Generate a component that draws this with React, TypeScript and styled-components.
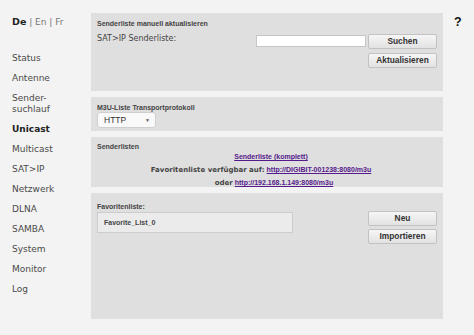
import React from 'react';
import styled, { createGlobalStyle } from 'styled-components';

const Global = createGlobalStyle`
  html, body { margin: 0; padding: 0; background: #f3f3f3; }
  body { width: 474px; height: 335px; overflow: hidden; }
`;

const Page = styled.div`
  display: flex;
  width: 474px;
  height: 335px;
`;

const Sidebar = styled.nav`
  width: 91px;
  flex: none;
  box-sizing: border-box;
  padding: 17px 0 0 12px;
  font-family: "DejaVu Sans", sans-serif;
  font-size: 9px;
  color: #4a4a4a;
`;

const LangRow = styled.div`
  line-height: 10px;
  color: #777;
`;

const Lang = styled.span<{ $active?: boolean }>`
  font-weight: ${p => (p.$active ? 700 : 400)};
  font-size: ${p => (p.$active ? '9.5px' : '9px')};
  color: ${p => (p.$active ? '#222' : '#777')};
`;

const Menu = styled.ul`
  list-style: none;
  margin: 21px 0 0;
  padding: 0;
`;

const MenuItem = styled.li<{ $active?: boolean }>`
  line-height: 11px;
  padding: 4.5px 0;
  font-weight: ${p => (p.$active ? 700 : 400)};
  color: ${p => (p.$active ? '#222' : '#4a4a4a')};
`;

const Main = styled.main`
  width: 352px;
  flex: none;
  padding-top: 13px;
  display: flex;
  flex-direction: column;
  gap: 6px;
`;

const Panel = styled.section<{ $h: number; $pt: number }>`
  box-sizing: border-box;
  height: ${p => p.$h}px;
  background: #e0dfdf;
  padding: ${p => p.$pt}px 6px 0 6px;
  font-family: "Liberation Sans", Arial, sans-serif;
  color: #444;
`;

const PanelTitle = styled.div`
  font-size: 7px;
  font-weight: 700;
  line-height: 8px;
  color: #444;
`;

const UpdateRow = styled.div`
  display: flex;
  justify-content: space-between;
  margin-top: 5px;
`;

const Label = styled.div`
  font-family: "DejaVu Sans", sans-serif;
  font-size: 8px;
  line-height: 10px;
  margin-top: 1px;
  color: #444;
`;

const Controls = styled.div`
  display: grid;
  grid-template-columns: 110px 69px;
  column-gap: 2px;
  row-gap: 4px;
  margin-top: 0.5px;
`;

const TextInput = styled.input`
  box-sizing: border-box;
  width: 110px;
  height: 12px;
  margin: 1.5px 0 0;
  padding: 0 3px;
  border: 1px solid #c6c6c6;
  background: #fff;
  outline: none;
`;

const Button = styled.button<{ $col?: number }>`
  box-sizing: border-box;
  width: 69px;
  height: 15px;
  padding: 0;
  grid-column: ${p => p.$col ?? 'auto'};
  border: 1px solid #c2c2c2;
  border-radius: 2px;
  background: linear-gradient(#f6f6f6, #e2e2e2);
  font-family: "Liberation Sans", Arial, sans-serif;
  font-size: 8.4px;
  font-weight: 700;
  color: #333;
  line-height: 13px;
`;

const Select = styled.div`
  box-sizing: border-box;
  width: 59px;
  height: 16px;
  display: flex;
  align-items: center;
  justify-content: space-between;
  padding: 0 5px 0 6px;
  border: 1px solid #cfcfcf;
  border-radius: 3px;
  background: #f9f9f9;
  font-size: 8.5px;
  color: #333;
`;

const Caret = styled.span`
  font-size: 5px;
  color: #555;
`;

const LinkBlock = styled.div`
  margin-top: -1px;
  text-align: center;
  font-weight: 700;
  color: #444;
`;

const Line = styled.div<{ $shift?: number }>`
  height: 13px;
  line-height: 13px;
  font-size: 7px;
  white-space: nowrap;
  transform: translateX(${p => p.$shift ?? 0}px);
`;

const Link = styled.a`
  color: #551a8b;
  text-decoration: underline;
`;

const Plain = styled.span`
  font-family: "DejaVu Sans", sans-serif;
`;

const FavRow = styled.div`
  display: flex;
  justify-content: space-between;
`;

const FavColumn = styled.div`
  display: flex;
  flex-direction: column;
`;

const FavBox = styled.div`
  box-sizing: border-box;
  width: 196px;
  height: 21px;
  margin-top: 1px;
  padding-left: 6px;
  border: 1px solid #cdcdcd;
  background: #ebebeb;
  font-size: 7px;
  font-weight: 700;
  line-height: 19px;
  color: #444;
`;

const ButtonStack = styled.div`
  display: flex;
  flex-direction: column;
  gap: 3px;
  margin-top: 8px;
`;

const Help = styled.div`
  padding: 15px 0 0 11px;
  font-family: "Liberation Sans", Arial, sans-serif;
  font-size: 12.5px;
  font-weight: 700;
  line-height: 14px;
  color: #111;
`;

const menu = [
  'Status',
  'Antenne',
  'Sender-\nsuchlauf',
  'Unicast',
  'Multicast',
  'SAT>IP',
  'Netzwerk',
  'DLNA',
  'SAMBA',
  'System',
  'Monitor',
  'Log',
];

export default function App() {
  return (
    <>
      <Global />
      <Page>
        <Sidebar>
          <LangRow>
            <Lang $active>De</Lang> | <Lang>En</Lang> | <Lang>Fr</Lang>
          </LangRow>
          <Menu>
            {menu.map(m => (
              <MenuItem key={m} $active={m === 'Unicast'}>
                {m.split('\n').map((part, i) => (
                  <div key={i}>{part}</div>
                ))}
              </MenuItem>
            ))}
          </Menu>
        </Sidebar>
        <Main>
          <Panel $h={78} $pt={7}>
            <PanelTitle>Senderliste manuell aktualisieren</PanelTitle>
            <UpdateRow>
              <Label>SAT&gt;IP Senderliste:</Label>
              <Controls>
                <TextInput />
                <Button>Suchen</Button>
                <Button $col={2}>Aktualisieren</Button>
              </Controls>
            </UpdateRow>
          </Panel>
          <Panel $h={34} $pt={7}>
            <PanelTitle>M3U-Liste Transportprotokoll</PanelTitle>
            <Select>
              <span>HTTP</span>
              <Caret>▼</Caret>
            </Select>
          </Panel>
          <Panel $h={50} $pt={6}>
            <PanelTitle>Senderlisten</PanelTitle>
            <LinkBlock>
              <Line $shift={4}>
                <Link href="#">Senderliste (komplett)</Link>
              </Line>
              <Line $shift={-6}>
                <Plain>Favoritenliste verfügbar auf:</Plain>{' '}
                <Link href="#">http://DIGIBIT-001238:8080/m3u</Link>
              </Line>
              <Line $shift={7}>
                <Plain>oder</Plain> <Link href="#">http://192.168.1.149:8080/m3u</Link>
              </Line>
            </LinkBlock>
          </Panel>
          <Panel $h={126} $pt={10}>
            <FavRow>
              <FavColumn>
                <PanelTitle>Favoritenliste:</PanelTitle>
                <FavBox>Favorite_List_0</FavBox>
              </FavColumn>
              <ButtonStack>
                <Button>Neu</Button>
                <Button>Importieren</Button>
              </ButtonStack>
            </FavRow>
          </Panel>
        </Main>
        <Help>?</Help>
      </Page>
    </>
  );
}
